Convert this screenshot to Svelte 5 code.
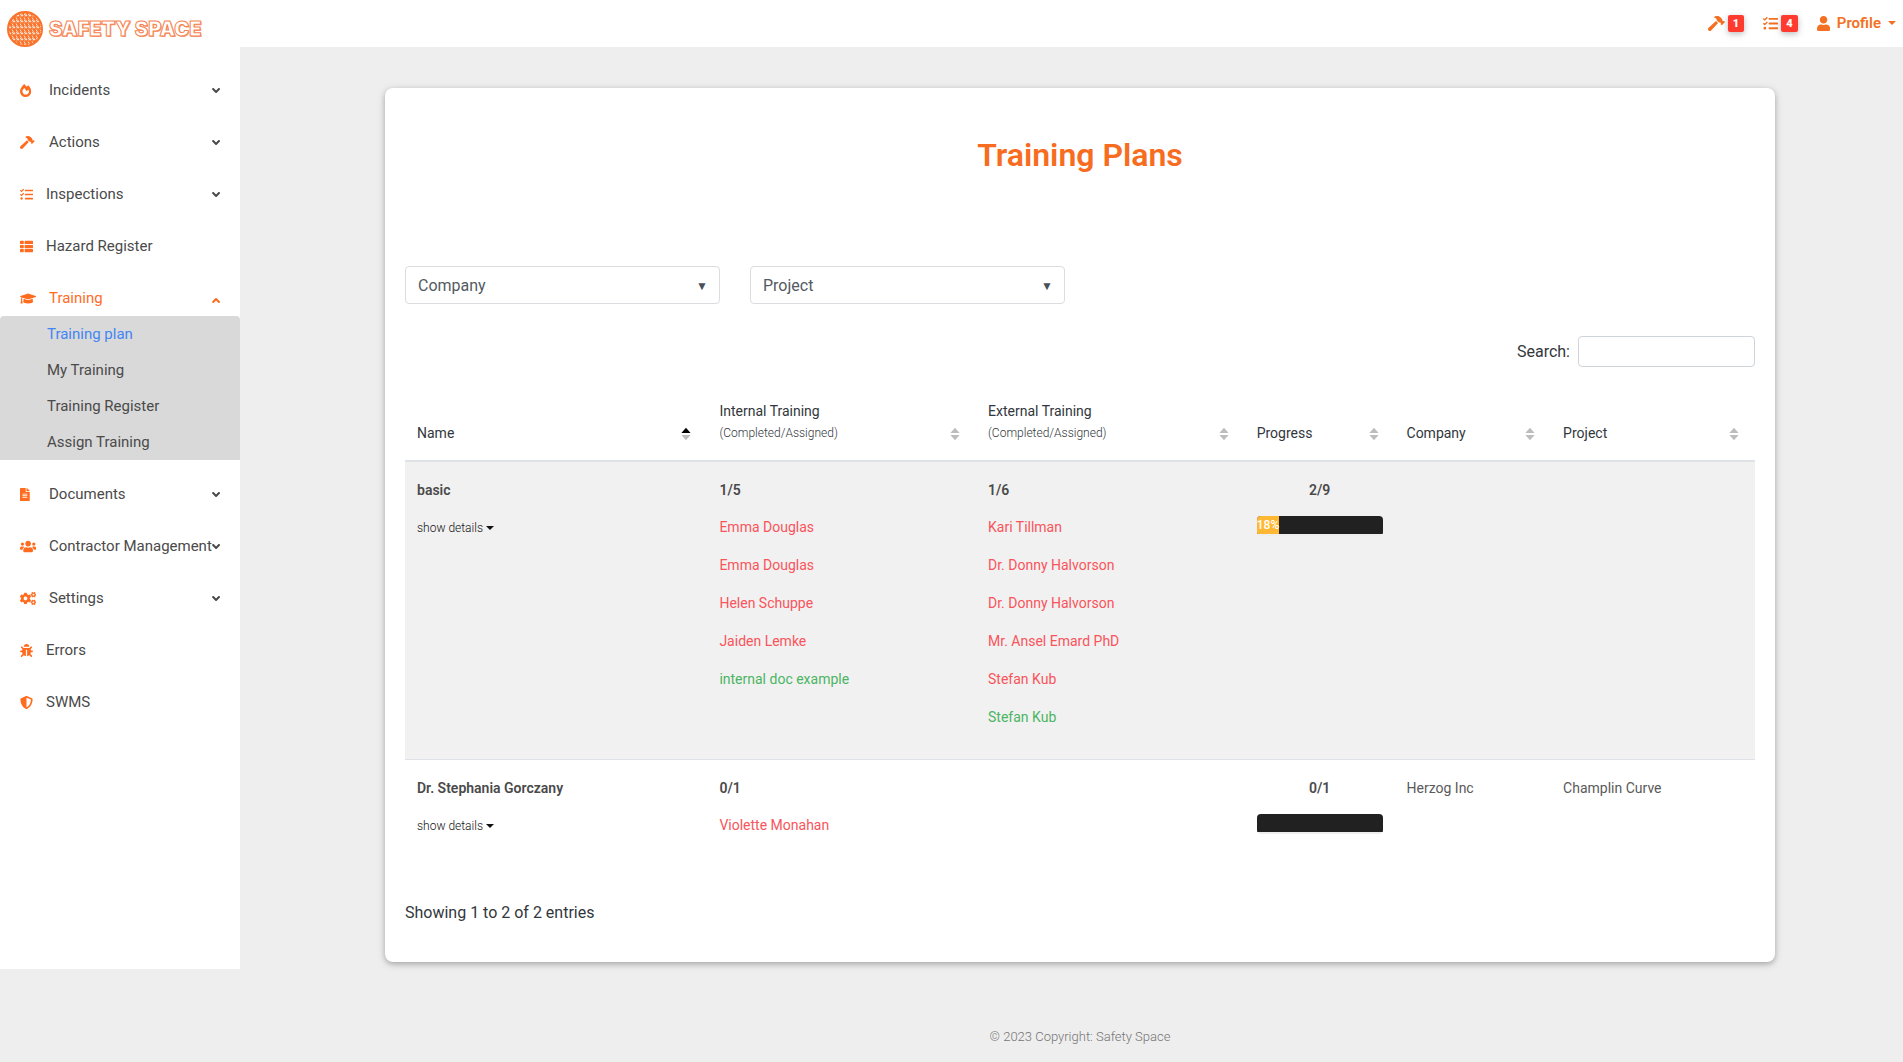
<script>
    const smallGear = 'l-8.2 14.3c-3 5.3-9.4 7.5-15.1 5.4-11.8-4.4-22.6-10.7-32.1-18.6-4.6-3.8-5.8-10.5-2.8-15.7l8.2-14.3c-6.9-8-12.3-17.3-15.9-27.4h-16.5c-6 0-11.2-4.3-12.2-10.3-2-12-2.1-24.6 0-37.1 1-6 6.2-10.4 12.2-10.4h16.5c3.6-10.1 9-19.4 15.9-27.4l-8.2-14.3c-3-5.2-1.9-11.9 2.8-15.7 9.5-7.9 20.4-14.2 32.1-18.6 5.7-2.1 12.1.1 15.1 5.4l8.2 14.3c10.5-1.9 21.2-1.9 31.7 0l8.2-14.3c3-5.3 9.4-7.5 15.1-5.4 11.8 4.4 22.6 10.7 32.1 18.6 4.6 3.8 5.8 10.5 2.8 15.7l-8.2 14.3c6.9 8 12.3 17.3 15.9 27.4h16.5c6 0 11.2 4.3 12.2 10.3 2 12 2.1 24.6 0 37.1-1 6-6.2 10.4-12.2 10.4h-16.5c-3.6 10.1-9 19.4-15.9 27.4l8.2 14.3c3 5.2 1.9 11.9-2.8 15.7-9.5 7.9-20.4 14.2-32.1 18.6-5.7 2.1-12.1-.1-15.1-5.4l-8.2-14.3c-10.4 1.9-21.2 1.9-31.7 0zm-10.5-58.8c38.5 29.6 82.4-14.3 52.8-52.8-38.5-29.7-82.4 14.3-52.8 52.8z';
    const bigGear = 'M386.3 286.1l33.7 16.8c10.1 5.8 14.5 18.1 10.5 29.1-8.9 24.2-26.4 46.4-42.6 65.8-7.4 8.9-20.2 11.1-30.3 5.3l-29.1-16.8c-16 13.7-34.6 24.6-54.9 31.7v33.6c0 11.6-8.3 21.6-19.7 23.6-24.6 4.2-50.4 4.4-75.9 0-11.5-2-20-11.9-20-23.6V418c-20.3-7.2-38.9-18-54.9-31.7L74 403c-10 5.8-22.9 3.6-30.3-5.3-16.2-19.4-33.3-41.6-42.2-65.7-4-10.9.4-23.2 10.5-29.1l33.3-16.8c-3.9-20.9-3.9-42.4 0-63.4L12 205.8c-10.1-5.8-14.6-18.1-10.5-29 8.9-24.2 26-46.4 42.2-65.8 7.4-8.9 20.2-11.1 30.3-5.3l29.1 16.8c16-13.7 34.6-24.6 54.9-31.7V57.1c0-11.5 8.2-21.5 19.6-23.5 24.6-4.2 50.5-4.4 76-.1 11.5 2 20 11.9 20 23.6v33.6c20.3 7.2 38.9 18 54.9 31.7l29.1-16.8c10-5.8 22.9-3.6 30.3 5.3 16.2 19.4 33.2 41.6 42.1 65.8 4 10.9.1 23.2-10 29.1l-33.7 16.8c3.9 21 3.9 42.5 0 63.5zm-117.6 21.1c59.2-77-28.7-164.9-105.7-105.7-59.2 77 28.7 164.9 105.7 105.7z';

    const icons = {
        fire: { w: 448, d: 'M323.56 51.2c-20.8 19.3-39.58 39.59-56.22 59.97C240.08 73.62 206.28 35.53 168 0 69.74 91.17 0 209.96 0 281.6 0 408.85 100.29 512 224 512s224-103.15 224-230.4c0-53.27-51.98-163.14-124.44-230.4zm-19.47 340.65C282.43 407.01 255.72 416 226.86 416 154.71 416 96 368.26 96 290.75c0-38.61 24.31-72.63 72.79-130.75 6.93 7.98 98.83 125.34 98.83 125.34l58.63-66.88c4.14 6.85 7.91 13.55 11.27 19.97 27.35 52.19 15.81 118.97-33.43 153.42z' },
        hammer: { w: 576, d: 'M571.31 193.94l-22.63-22.63c-6.25-6.25-16.38-6.25-22.63 0l-11.31 11.31-28.9-28.9c5.63-21.31.36-44.9-16.35-61.61l-45.25-45.25c-62.48-62.48-163.79-62.48-226.28 0l90.51 45.25v18.75c0 16.97 6.74 33.25 18.75 45.25l49.14 49.14c16.71 16.71 40.3 21.98 61.61 16.35l28.9 28.9-11.31 11.31c-6.25 6.25-6.25 16.38 0 22.63l22.63 22.63c6.25 6.25 16.38 6.25 22.63 0l90.51-90.51c6.23-6.24 6.23-16.37-.02-22.62zm-286.72-15.2c-3.7-3.7-6.84-7.79-9.85-11.95L19.64 404.96c-25.57 23.88-26.26 64.19-1.53 88.93s65.05 24.05 88.92-1.53l238.13-255.07c-3.96-2.91-7.9-5.87-11.44-9.41l-49.13-49.14z' },
        tasks: { w: 512, d: 'M139.61 35.5a12 12 0 0 0-17 0L58.93 98.81l-22.7-22.12a12 12 0 0 0-17 0L3.53 92.41a12 12 0 0 0 0 17l47.59 47.4a12.78 12.78 0 0 0 17.61 0l15.59-15.62L156.52 69a12.09 12.09 0 0 0 .09-17zm0 159.19a12 12 0 0 0-17 0l-63.68 63.72-22.7-22.1a12 12 0 0 0-17 0L3.53 252a12 12 0 0 0 0 17L51 316.5a12.77 12.77 0 0 0 17.6 0l15.7-15.69 72.2-72.22a12 12 0 0 0 .09-16.9zM64 368c-26.49 0-48.59 21.5-48.59 48S37.53 464 64 464a48 48 0 0 0 0-96zm432 16H208a16 16 0 0 0-16 16v32a16 16 0 0 0 16 16h288a16 16 0 0 0 16-16v-32a16 16 0 0 0-16-16zm0-320H208a16 16 0 0 0-16 16v32a16 16 0 0 0 16 16h288a16 16 0 0 0 16-16V80a16 16 0 0 0-16-16zm0 160H208a16 16 0 0 0-16 16v32a16 16 0 0 0 16 16h288a16 16 0 0 0 16-16v-32a16 16 0 0 0-16-16z' },
        list: { w: 512, d: 'M149.333 216v80c0 13.255-10.745 24-24 24H24c-13.255 0-24-10.745-24-24v-80c0-13.255 10.745-24 24-24h101.333c13.255 0 24 10.745 24 24zM0 376v80c0 13.255 10.745 24 24 24h101.333c13.255 0 24-10.745 24-24v-80c0-13.255-10.745-24-24-24H24c-13.255 0-24 10.745-24 24zM125.333 32H24C10.745 32 0 42.745 0 56v80c0 13.255 10.745 24 24 24h101.333c13.255 0 24-10.745 24-24V56c0-13.255-10.745-24-24-24zm80 448H488c13.255 0 24-10.745 24-24v-80c0-13.255-10.745-24-24-24H205.333c-13.255 0-24 10.745-24 24v80c0 13.255 10.745 24 24 24zm-24-424v80c0 13.255 10.745 24 24 24H488c13.255 0 24-10.745 24-24V56c0-13.255-10.745-24-24-24H205.333c-13.255 0-24 10.745-24 24zm24 264H488c13.255 0 24-10.745 24-24v-80c0-13.255-10.745-24-24-24H205.333c-13.255 0-24 10.745-24 24v80c0 13.255 10.745 24 24 24z' },
        cap: { w: 640, d: 'M622.34 153.2L343.4 67.5c-15.2-4.67-31.6-4.67-46.79 0L17.66 153.2c-23.54 7.23-23.54 38.36 0 45.59l48.63 14.94c-10.67 13.19-17.23 29.28-17.88 46.9C38.78 266.15 32 276.11 32 288c0 10.78 5.68 19.85 13.86 25.65L20.33 428.53C18.11 438.52 25.71 448 35.94 448h56.11c10.24 0 17.84-9.48 15.62-19.47L82.14 313.65C90.32 307.85 96 298.78 96 288c0-11.57-6.47-21.25-15.66-26.87.76-15.02 8.44-28.3 20.69-36.72L296.6 284.5c9.06 2.78 26.44 6.25 46.79 0l278.95-85.7c23.55-7.24 23.55-38.36 0-45.6zM352.79 315.09c-28.53 8.76-52.84 3.92-65.59 0l-145.02-44.55L128 384c0 35.35 85.96 64 192 64s192-28.65 192-64l-14.18-113.47-145.03 44.56z' },
        file: { w: 384, d: 'M224 136V0H24C10.7 0 0 10.7 0 24v464c0 13.3 10.7 24 24 24h336c13.3 0 24-10.7 24-24V160H248c-13.2 0-24-10.8-24-24zm64 236c0 6.6-5.4 12-12 12H108c-6.6 0-12-5.4-12-12v-8c0-6.6 5.4-12 12-12h168c6.6 0 12 5.4 12 12v8zm0-64c0 6.6-5.4 12-12 12H108c-6.6 0-12-5.4-12-12v-8c0-6.6 5.4-12 12-12h168c6.6 0 12 5.4 12 12v8zm0-72v8c0 6.6-5.4 12-12 12H108c-6.6 0-12-5.4-12-12v-8c0-6.6 5.4-12 12-12h168c6.6 0 12 5.4 12 12zm96-114.1v6.1H256V0h6.1c6.4 0 12.5 2.5 17 7l97.9 98c4.5 4.5 7 10.6 7 16.9z' },
        users: { w: 640, d: 'M96 224c35.3 0 64-28.7 64-64s-28.7-64-64-64-64 28.7-64 64 28.7 64 64 64zm448 0c35.3 0 64-28.7 64-64s-28.7-64-64-64-64 28.7-64 64 28.7 64 64 64zm32 32h-64c-17.6 0-33.5 7.1-45.1 18.6 40.3 22.1 68.9 62 75.1 109.4h66c17.7 0 32-14.3 32-32v-32c0-35.3-28.7-64-64-64zm-256 0c61.9 0 112-50.1 112-112S381.9 32 320 32 208 82.1 208 144s50.1 112 112 112zm76.8 32h-8.3c-20.8 10-43.9 16-68.5 16s-47.6-6-68.5-16h-8.3C179.6 288 128 339.6 128 403.2V432c0 26.5 21.5 48 48 48h288c26.5 0 48-21.5 48-48v-28.8c0-63.6-51.6-115.2-115.2-115.2zm-223.7-13.4C161.5 263.1 145.6 256 128 256H64c-35.3 0-64 28.7-64 64v32c0 17.7 14.3 32 32 32h65.9c6.3-47.4 34.9-87.3 75.2-109.4z' },
        gears: { w: 640, d: `M512.1 191${smallGear}${bigGear}M512.1 492${smallGear}` },
        bug: { w: 512, d: 'M511.988 288.9c-.478 17.43-15.217 31.1-32.653 31.1H424v16c0 21.864-4.882 42.584-13.6 61.145l60.228 60.228c12.496 12.497 12.496 32.758 0 45.255-12.498 12.497-32.759 12.496-45.256 0l-54.736-54.736C345.886 467.965 314.351 480 280 480V236c0-6.627-5.373-12-12-12h-24c-6.627 0-12 5.373-12 12v244c-34.351 0-65.886-12.035-90.636-32.108l-54.736 54.736c-12.498 12.497-32.759 12.496-45.256 0-12.496-12.497-12.496-32.758 0-45.255l60.228-60.228C92.882 378.584 88 357.864 88 336v-16H32.666C15.23 320 .491 306.33.013 288.9-.484 270.816 13.453 256 31.5 256H88v-58.745l-46.628-46.628c-12.496-12.497-12.496-32.758 0-45.255 12.498-12.497 32.758-12.497 45.256 0L141.255 160h229.489l54.627-54.627c12.498-12.497 32.758-12.497 45.256 0 12.496 12.497 12.496 32.758 0 45.255L424 197.255V256h56.5c18.047 0 31.984 14.816 31.488 32.9zM257 0c-61.856 0-112 50.144-112 112h224C369 50.144 318.856 0 257 0z' },
        shield: { w: 512, d: 'M466.5 83.7l-192-80a48.15 48.15 0 0 0-36.9 0l-192 80C27.7 91.1 16 108.6 16 128c0 198.5 114.5 335.7 221.5 380.3 11.8 4.9 25.1 4.9 36.9 0C360.1 472.6 496 349.3 496 128c0-19.4-11.7-36.9-29.5-44.3zM256.1 446.3l-.1-381 175.9 73.3c-3.3 151.4-82.1 261.1-175.8 307.7z' },
        user: { w: 448, d: 'M224 256c70.7 0 128-57.3 128-128S294.7 0 224 0 96 57.3 96 128s57.3 128 128 128zm89.6 32h-16.7c-22.2 10.2-46.9 16-72.9 16s-50.6-5.8-72.9-16h-16.7C60.2 288 0 348.2 0 422.4V464c0 26.5 21.5 48 48 48h352c26.5 0 48-21.5 48-48v-41.6c0-74.2-60.2-134.4-134.4-134.4z' },
        angle: { w: 320, d: 'M143 352.3L7 216.3c-9.4-9.4-9.4-24.6 0-33.9l22.6-22.6c9.4-9.4 24.6-9.4 33.9 0l96.4 96.4 96.4-96.4c9.4-9.4 24.6-9.4 33.9 0l22.6 22.6c9.4 9.4 9.4 24.6 0 33.9l-136 136c-9.2 9.4-24.4 9.4-33.8 0z' }
    };

    const menu = [
        { label: 'Incidents', icon: 'fire', wide: true, expandable: true },
        { label: 'Actions', icon: 'hammer', wide: true, expandable: true },
        { label: 'Inspections', icon: 'tasks', expandable: true },
        { label: 'Hazard Register', icon: 'list' },
        {
            label: 'Training', icon: 'cap', wide: true, expandable: true, open: true,
            children: ['Training plan', 'My Training', 'Training Register', 'Assign Training']
        },
        { label: 'Documents', icon: 'file', wide: true, expandable: true },
        { label: 'Contractor Management', icon: 'users', wide: true, expandable: true },
        { label: 'Settings', icon: 'gears', wide: true, expandable: true },
        { label: 'Errors', icon: 'bug' },
        { label: 'SWMS', icon: 'shield' }
    ];

    const columns = [
        { key: 'name', label: 'Name', sorted: true },
        { key: 'internal', label: 'Internal Training', note: '(Completed/Assigned)' },
        { key: 'external', label: 'External Training', note: '(Completed/Assigned)' },
        { key: 'progress', label: 'Progress' },
        { key: 'company', label: 'Company' },
        { key: 'project', label: 'Project' }
    ];

    const rows = [
        {
            name: 'basic',
            internal: {
                count: '1/5',
                items: [
                    { name: 'Emma Douglas' },
                    { name: 'Emma Douglas' },
                    { name: 'Helen Schuppe' },
                    { name: 'Jaiden Lemke' },
                    { name: 'internal doc example', done: true }
                ]
            },
            external: {
                count: '1/6',
                items: [
                    { name: 'Kari Tillman' },
                    { name: 'Dr. Donny Halvorson' },
                    { name: 'Dr. Donny Halvorson' },
                    { name: 'Mr. Ansel Emard PhD' },
                    { name: 'Stefan Kub' },
                    { name: 'Stefan Kub', done: true }
                ]
            },
            total: '2/9',
            percent: 18,
            company: '',
            project: ''
        },
        {
            name: 'Dr. Stephania Gorczany',
            internal: { count: '0/1', items: [{ name: 'Violette Monahan' }] },
            external: { count: '', items: [] },
            total: '0/1',
            percent: 0,
            company: 'Herzog Inc',
            project: 'Champlin Curve'
        }
    ];

    let search = $state('');
</script>

{#snippet icon(name)}
    <svg class="icon" viewBox="0 0 {icons[name].w} 512" fill="currentColor" aria-hidden="true">
        <path d={icons[name].d} />
    </svg>
{/snippet}

<header class="topbar">
    <a class="brand" href="#home">
        <svg class="brand-mark" viewBox="0 0 36 36" aria-hidden="true">
            <defs>
                <pattern id="mesh" width="4" height="6" patternUnits="userSpaceOnUse">
                    <rect width="4" height="6" fill="#f9732b" />
                    <path d="M1 0.5l1.2 2-1.2 2M3 3.5l-1 2M3 -2l1 2M3 3.5l1 2" stroke="#fff" stroke-width="0.8" fill="none" />
                </pattern>
            </defs>
            <circle cx="18" cy="18" r="17" fill="url(#mesh)" stroke="#f9732b" stroke-width="2" />
        </svg>
        <span class="brand-name">SAFETY SPACE</span>
    </a>
    <nav class="tools" aria-label="Account">
        <a href="#actions" class="tool" aria-label="Actions">{@render icon('hammer')}<span class="badge">1</span></a>
        <a href="#inspections" class="tool" aria-label="Inspections">{@render icon('tasks')}<span class="badge">4</span></a>
        <button class="profile" type="button">{@render icon('user')}<span>Profile</span><i class="caret"></i></button>
    </nav>
</header>

<div class="layout">
    <aside class="sidebar">
        <ul class="menu">
            {#each menu as item}
                <li class="menu-item">
                    <a href="#{item.label}" class="menu-link" class:open={item.open}>
                        <span class="menu-icon" class:wide={item.wide}>{@render icon(item.icon)}</span>
                        <span class="menu-label">{item.label}</span>
                        {#if item.expandable}
                            <span class="arrow">{@render icon('angle')}</span>
                        {/if}
                    </a>
                    {#if item.children}
                        <ul class="submenu">
                            {#each item.children as child, i}
                                <li><a href="#{child}" class:current={i === 0}>{child}</a></li>
                            {/each}
                        </ul>
                    {/if}
                </li>
            {/each}
        </ul>
    </aside>

    <main class="content">
        <section class="card">
            <h1>Training Plans</h1>

            <div class="filters">
                <div class="select">
                    <select aria-label="Company"><option>Company</option></select>
                    <span class="select-arrow">▼</span>
                </div>
                <div class="select">
                    <select aria-label="Project"><option>Project</option></select>
                    <span class="select-arrow">▼</span>
                </div>
            </div>

            <div class="search">
                <label for="search">Search:</label>
                <input id="search" type="search" bind:value={search} />
            </div>

            <table>
                <thead>
                    <tr>
                        {#each columns as col}
                            <th class="col-{col.key}" scope="col">
                                <button class="sort" type="button">
                                    <span>{col.label}{#if col.note}<small>{col.note}</small>{/if}</span>
                                    <svg class="sort-icon" class:sorted={col.sorted} viewBox="0 0 10 14" aria-hidden="true">
                                        <path class="up" d="M5 0.8L9.6 6H0.4z" />
                                        <path class="down" d="M5 13.2L9.6 8H0.4z" />
                                    </svg>
                                </button>
                            </th>
                        {/each}
                    </tr>
                </thead>
                <tbody>
                    {#each rows as row}
                        <tr>
                            <td>
                                <strong>{row.name}</strong>
                                <button class="details" type="button">show details<i class="caret"></i></button>
                            </td>
                            {#each [row.internal, row.external] as training}
                                <td>
                                    <strong>{training.count}</strong>
                                    <ul class="people">
                                        {#each training.items as person}
                                            <li class:done={person.done}>{person.name}</li>
                                        {/each}
                                    </ul>
                                </td>
                            {/each}
                            <td>
                                <strong class="total">{row.total}</strong>
                                <div class="progress">
                                    <div class="track">
                                        <div class="bar" style="width: {row.percent}%">{row.percent ? `${row.percent}%` : ''}</div>
                                    </div>
                                </div>
                            </td>
                            <td>{row.company}</td>
                            <td>{row.project}</td>
                        </tr>
                    {/each}
                </tbody>
            </table>

            <p class="info">Showing 1 to 2 of 2 entries</p>
        </section>
    </main>
</div>

<footer>© 2023 Copyright: Safety Space</footer>

<style>
    :global(body) {
        background: #eee;
        color: #32373c;
        font-family: Roboto, "Liberation Sans", sans-serif;
        font-size: 16px;
        font-weight: 400;
    }

    a {
        color: inherit;
        text-decoration: none;
    }

    ul {
        list-style: none;
        margin: 0;
        padding: 0;
    }

    button {
        background: none;
        border: 0;
        padding: 0;
        color: inherit;
        font: inherit;
        cursor: pointer;
    }

    .icon {
        display: block;
        height: 1em;
    }

    .caret {
        border: 4px solid transparent;
        border-top-color: currentColor;
        border-bottom: 0;
    }

    /* top bar */
    .topbar {
        display: flex;
        align-items: flex-start;
        justify-content: space-between;
        height: 47px;
        padding: 0 7px;
        box-sizing: border-box;
        background: #fff;
    }

    .brand {
        display: flex;
        align-items: center;
        gap: 6px;
        padding-top: 11px;
    }

    .brand-mark {
        width: 36px;
        height: 36px;
    }

    .brand-name {
        font-family: Inter, Roboto, sans-serif;
        font-size: 20px;
        font-weight: 900;
        line-height: 24px;
        color: #fff;
        -webkit-text-stroke: 1px #f58350;
        text-shadow: 1px 1px 0 #f9a27c;
    }

    .tools {
        display: flex;
        align-items: center;
        gap: 19px;
        height: 46px;
        color: #f37022;
        font-size: 15px;
    }

    .tool {
        display: flex;
        align-items: center;
        gap: 3px;
    }

    .badge {
        padding: 0 5px;
        border-radius: 2px;
        background: #ff3b30;
        color: #fff;
        font-size: 11px;
        font-weight: 900;
        line-height: 17px;
        box-shadow: 0 2px 5px rgba(0, 0, 0, 0.16), 0 2px 10px rgba(0, 0, 0, 0.12);
    }

    .profile {
        display: flex;
        align-items: center;
        gap: 7px;
        font-weight: 600;
    }

    /* sidebar */
    .layout {
        display: grid;
        grid-template-columns: 240px 1fr;
    }

    .sidebar {
        padding-top: 25px;
        background: #fff;
        color: #4a4a4a;
        font-size: 15px;
    }

    .menu-item {
        margin-bottom: 16px;
    }

    .menu-link {
        display: flex;
        align-items: center;
        height: 36px;
        padding: 0 20px;
    }

    .menu-link.open {
        color: #ff6c1f;
    }

    .menu-icon {
        width: 26px;
        color: #ff6c1f;
        font-size: 13px;
    }

    .menu-icon.wide {
        width: 29px;
    }

    .menu-label {
        flex: 1;
        min-width: 0;
        white-space: nowrap;
    }

    .arrow {
        font-size: 13px;
    }

    .open .arrow {
        transform: rotate(180deg);
        margin-top: 4px;
    }

    .submenu {
        background: #d9d9d9;
        border-radius: 4px 4px 0 0;
    }

    .submenu a {
        display: block;
        padding-left: 47px;
        line-height: 36px;
    }

    .submenu .current {
        color: #4285f4;
    }

    /* card */
    .content {
        padding: 41px 128px 7px 145px;
    }

    .card {
        padding: 48px 20px 38px;
        border-radius: 8px;
        background: #fff;
        box-shadow: 0 2px 5px rgba(0, 0, 0, 0.2), 0 2px 10px rgba(0, 0, 0, 0.14);
    }

    h1 {
        margin: 0 0 92px;
        color: #f76c20;
        font-size: 32px;
        font-weight: 600;
        line-height: 38px;
        text-align: center;
    }

    .filters {
        display: grid;
        grid-template-columns: repeat(4, 1fr);
        gap: 30px;
    }

    .select {
        position: relative;
    }

    select {
        display: block;
        width: 100%;
        height: 38px;
        padding: 0 12px;
        appearance: none;
        border: 1px solid #dadce0;
        border-radius: 4px;
        background: #fff;
        color: #535a61;
        font: inherit;
    }

    .select-arrow {
        position: absolute;
        top: 10px;
        right: 12px;
        color: #495057;
        font-size: 12px;
        line-height: 20px;
        pointer-events: none;
    }

    .search {
        display: flex;
        justify-content: flex-end;
        align-items: center;
        gap: 8px;
        margin: 32px 0 16px;
    }

    .search input {
        width: 177px;
        height: 31px;
        box-sizing: border-box;
        border: 1px solid #ced4da;
        border-radius: 4px;
        background: #fff;
        font: inherit;
    }

    /* table */
    table {
        width: 100%;
        table-layout: fixed;
        border-collapse: separate;
        border-spacing: 0;
        font-size: 14px;
        line-height: 22px;
    }

    th {
        box-sizing: border-box;
        padding: 17px 12px 16px;
        border-bottom: 2px solid #dee2e6;
        font-weight: 400;
        text-align: left;
        vertical-align: bottom;
    }

    .col-name {
        width: 22.4%;
    }

    .col-internal,
    .col-external {
        width: 19.9%;
    }

    .col-progress {
        width: 11.1%;
    }

    .col-company {
        width: 11.6%;
    }

    .sort {
        display: flex;
        justify-content: space-between;
        align-items: flex-end;
        width: 100%;
        padding-right: 4px;
        text-align: left;
    }

    small {
        display: block;
        font-size: 12px;
        font-weight: 300;
    }

    .sort-icon {
        width: 10px;
        height: 14px;
        margin-bottom: 3px;
        fill: #bdbdbd;
    }

    .sorted .up {
        fill: #000;
    }

    td {
        padding: 17px 12px 15px;
        color: #5a5a5a;
        vertical-align: top;
    }

    tbody tr:nth-child(odd) td {
        border-bottom: 1px solid #dee2e6;
        background: #f1f1f1;
    }

    strong {
        display: block;
        min-height: 22px;
        margin-bottom: 15px;
        color: #4a4a4a;
        font-weight: 600;
    }

    .total {
        text-align: center;
    }

    .details {
        display: flex;
        align-items: center;
        gap: 3px;
        color: #111;
        font-size: 12px;
        font-weight: 300;
        line-height: 24px;
    }

    .people li {
        margin-bottom: 16px;
        color: #f9545b;
    }

    .people .done {
        color: #4bb563;
    }

    .progress {
        height: 20px;
        overflow: hidden;
        border-radius: 4px;
        background: #eee;
    }

    .track {
        height: 18px;
        background: #212121;
    }

    .bar {
        height: 18px;
        background: #ffb833;
        color: #fff;
        font-size: 12px;
        font-weight: 500;
        line-height: 18px;
        text-align: center;
    }

    .info {
        margin: 35px 0 0;
        line-height: 22px;
    }

    footer {
        padding: 58px 128px 0 385px;
        color: #757575;
        font-size: 13px;
        font-weight: 300;
        line-height: 20px;
        text-align: center;
    }
</style>
